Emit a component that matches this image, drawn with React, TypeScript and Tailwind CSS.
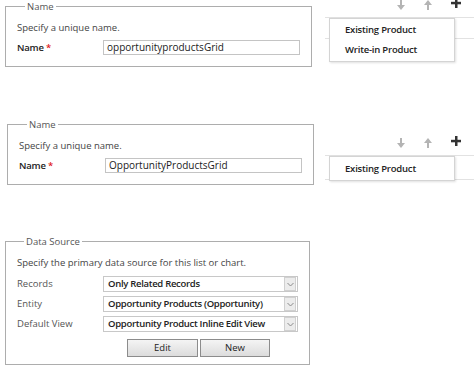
import React from "react";

const font = { fontFamily: '"Segoe UI", "Open Sans", "Noto Sans", sans-serif' };

function ArrowDown() {
  return (
    <svg width="8" height="10" viewBox="0 0 8 10">
      <rect x="3" y="0" width="2" height="6" fill="#b4b4b4" />
      <polygon points="0,5 8,5 4,10" fill="#b4b4b4" />
    </svg>
  );
}

function ArrowUp() {
  return (
    <svg width="8" height="10" viewBox="0 0 8 10">
      <rect x="3" y="4" width="2" height="6" fill="#b4b4b4" />
      <polygon points="0,5 8,5 4,0" fill="#b4b4b4" />
    </svg>
  );
}

function Plus() {
  return (
    <svg width="10" height="10" viewBox="0 0 10 10">
      <rect x="4" y="0" width="2.5" height="10" fill="#333" />
      <rect x="0" y="3.8" width="10" height="2.5" fill="#333" />
    </svg>
  );
}

function Chevron() {
  return (
    <svg width="7" height="5" viewBox="0 0 7 5">
      <polyline points="0.5,1 3.5,4 6.5,1" fill="none" stroke="#8a8a8a" strokeWidth="1" />
    </svg>
  );
}

function NameBox({ value, left }: { value: string; left: string }) {
  return (
    <fieldset className={`${left} w-[305px] border border-[#adadad] px-[11px] pb-[11px]`}>
      <legend className="ml-[8px] px-[2px] text-[9.5px] leading-[13px] text-[#555]">Name</legend>
      <div className="mt-[8px] text-[9.5px] leading-[14px] text-[#444]">Specify a unique name.</div>
      <div className="mt-[5px] flex items-center">
        <div className="w-[86px] text-[9.5px] font-semibold leading-[15px] tracking-[-0.2px] text-[#222]">
          Name <span className="text-[#e02020]">*</span>
        </div>
        <div className="h-[15px] w-[197px] border border-[#c4c4c4] bg-white pl-[3px] text-[10px] leading-[13px] text-[#222]">
          {value}
        </div>
      </div>
    </fieldset>
  );
}

function SelectRow({ label, value }: { label: string; value: string }) {
  return (
    <div className="flex h-[20px] items-center">
      <div className="w-[86px] text-[9.5px] text-[#555]">{label}</div>
      <div className="flex h-[16px] w-[195px] items-center justify-between border border-[#c8c8c8] bg-white pl-[4px]">
        <span className="whitespace-nowrap text-[9.5px] font-semibold leading-[14px] tracking-[-0.3px] text-[#222]">
          {value}
        </span>
        <span className="mr-[1px] flex h-[14px] w-[12px] items-center justify-center border border-[#d0d0d0] bg-[#ececec]">
          <Chevron />
        </span>
      </div>
    </div>
  );
}

function Toolbar() {
  return (
    <div className="flex h-[24px] items-center justify-end gap-[19px] pr-[13px]">
      <ArrowDown />
      <ArrowUp />
      <span className="-mt-[5px]">
        <Plus />
      </span>
    </div>
  );
}

function MenuItem({ label, h }: { label: string; h: string }) {
  return (
    <div className={`${h} whitespace-nowrap pl-[15px] text-[9.5px] font-semibold tracking-[-0.2px] text-[#222]`}>
      {label}
    </div>
  );
}

export default function App() {
  return (
    <div className="h-[372px] w-[474px] overflow-hidden bg-white" style={font}>
      {/* first name section with open menu */}
      <div className="flex items-start">
        <NameBox value="opportunityproductsGrid" left="ml-[5px]" />
        <div className="relative ml-[13px] -mt-[7px] w-[151px]">
          <Toolbar />
          <div className="h-[22px] border-y border-[#e2e2e2]" />
          <div className="absolute left-[4px] top-[25px] w-[126px] border border-[#d4d4d4] bg-white py-[1px] shadow-[1px_1px_2px_rgba(0,0,0,0.12)]">
            <MenuItem label="Existing Product" h="h-[20px] leading-[20px]" />
            <MenuItem label="Write-in Product" h="h-[20px] leading-[20px]" />
          </div>
        </div>
      </div>

      {/* second name section */}
      <div className="mt-[51px] flex items-start">
        <NameBox value="OpportunityProductsGrid" left="ml-[7px]" />
        <div className="relative ml-[11px] mt-[13px] w-[151px]">
          <Toolbar />
          <div className="h-[25px] border-y border-[#e2e2e2]" />
          <div className="absolute left-[4px] top-[25px] w-[126px] border border-[#d4d4d4] bg-white py-[1px] shadow-[1px_1px_2px_rgba(0,0,0,0.12)]">
            <MenuItem label="Existing Product" h="h-[21px] leading-[21px]" />
          </div>
        </div>
      </div>

      {/* data source */}
      <fieldset className="ml-[5px] mt-[50px] w-[305px] border border-[#adadad] px-[11px] pb-[7px]">
        <legend className="ml-[7px] px-[2px] text-[9.5px] leading-[13px] text-[#555]">Data Source</legend>
        <div className="mt-[8px] text-[9.5px] leading-[14px] text-[#444]">
          Specify the primary data source for this list or chart.
        </div>
        <div className="mt-[4px] flex flex-col">
          <SelectRow label="Records" value="Only Related Records" />
          <SelectRow label="Entity" value="Opportunity Products (Opportunity)" />
          <SelectRow label="Default View" value="Opportunity Product Inline Edit View" />
        </div>
        <div className="mt-[5px] flex gap-[2px] pl-[110px]">
          <button className="h-[18px] w-[71px] border border-[#8c8c8c] bg-gradient-to-b from-[#f4f4f4] to-[#dcdcdc] text-[9.5px] leading-[16px] text-[#222]">
            Edit
          </button>
          <button className="h-[18px] w-[70px] border border-[#8c8c8c] bg-gradient-to-b from-[#f4f4f4] to-[#dcdcdc] text-[9.5px] leading-[16px] text-[#222]">
            New
          </button>
        </div>
      </fieldset>
    </div>
  );
}
